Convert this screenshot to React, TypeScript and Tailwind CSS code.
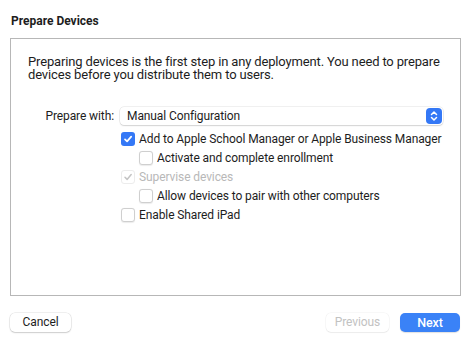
import React from 'react';

function Check({ on, disabled }: { on?: boolean; disabled?: boolean }) {
  if (on) {
    return (
      <span className="flex h-[14px] w-[14px] shrink-0 items-center justify-center rounded-[3px] bg-[#3478f6]">
        <svg width="10" height="10" viewBox="0 0 10 10">
          <path d="M2 5.3 L4.1 7.4 L8.2 2.6" fill="none" stroke="white" strokeWidth="1.7" strokeLinecap="round" strokeLinejoin="round" />
        </svg>
      </span>
    );
  }
  if (disabled) {
    return (
      <span className="flex h-[14px] w-[14px] shrink-0 items-center justify-center rounded-[3px] border border-[#ececec] bg-white">
        <svg width="10" height="10" viewBox="0 0 10 10">
          <path d="M2 5.3 L4.1 7.4 L8.2 2.6" fill="none" stroke="#c4c4c4" strokeWidth="1.5" strokeLinecap="round" strokeLinejoin="round" />
        </svg>
      </span>
    );
  }
  return <span className="h-[14px] w-[14px] shrink-0 rounded-[3px] border border-[#cfcfcf] bg-white shadow-[0_0.5px_1px_rgba(0,0,0,0.08)]" />;
}

function Row({ label, on, disabled, indent }: { label: string; on?: boolean; disabled?: boolean; indent?: boolean }) {
  return (
    <div className={`flex h-[19px] items-center gap-[4px] whitespace-nowrap ${indent ? 'pl-[18px]' : ''}`}>
      <Check on={on} disabled={disabled} />
      <span className={disabled ? 'text-[#b8b8b8]' : 'text-[#1d1d1d]'}>{label}</span>
    </div>
  );
}

export default function App() {
  return (
    <div className="relative h-[348px] w-[474px] bg-white font-['Roboto',sans-serif] text-[12px] tracking-[-0.1px] text-[#1d1d1d]">
      <div className="px-[11px] pt-[13px] text-[12px] font-bold leading-[16px] tracking-normal">Prepare Devices</div>

      <div className="ml-[10px] mt-[9px] h-[258px] w-[451px] border border-[#b7b7b7] bg-white pl-[17px] pr-[8px] pt-[16px]">
        <p className="text-[13px] leading-[13px] tracking-[-0.15px]">
          Preparing devices is the first step in any deployment. You need to prepare devices before you distribute them to users.
        </p>

        <div className="mt-[26px] flex items-center whitespace-nowrap">
          <span className="w-[86px] text-right">Prepare with:</span>
          <div className="ml-[6px] flex h-[18px] w-[323px] items-center justify-between rounded-[4px] bg-white pl-[7px] pr-[1px] shadow-[0_0_0_0.5px_rgba(0,0,0,0.12),0_1px_1.5px_rgba(0,0,0,0.12)]">
            <span>Manual Configuration</span>
            <span className="flex h-[16px] w-[16px] items-center justify-center rounded-[4px] bg-[#3478f6]">
              <svg width="10" height="12" viewBox="0 0 10 12">
                <path d="M2.5 4.5 L5 2 L7.5 4.5 M2.5 7.5 L5 10 L7.5 7.5" fill="none" stroke="white" strokeWidth="1.5" strokeLinecap="round" strokeLinejoin="round" />
              </svg>
            </span>
          </div>
        </div>

        <div className="mt-[4px] flex flex-col pl-[93px]">
          <Row label="Add to Apple School Manager or Apple Business Manager" on />
          <Row label="Activate and complete enrollment" indent />
          <Row label="Supervise devices" disabled />
          <Row label="Allow devices to pair with other computers" indent />
          <Row label="Enable Shared iPad" />
        </div>
      </div>

      <div className="mt-[17px] flex items-center pl-[10px] pr-[14px]">
        <button className="h-[19px] w-[61px] rounded-[5px] bg-white leading-[19px] text-[#1d1d1d] shadow-[0_0_0_0.5px_rgba(0,0,0,0.12),0_1px_1.5px_rgba(0,0,0,0.15)]">
          Cancel
        </button>
        <div className="flex-1" />
        <button className="h-[19px] w-[63px] rounded-[5px] bg-white leading-[19px] text-[#c2c2c2] shadow-[0_0_0_0.5px_rgba(0,0,0,0.06),0_1px_1px_rgba(0,0,0,0.05)]">
          Previous
        </button>
        <button className="ml-[11px] h-[19px] w-[60px] rounded-[5px] bg-[#3a82f7] text-[12.5px] leading-[19px] font-medium text-white shadow-[0_1px_1px_rgba(0,0,0,0.12)]">
          Next
        </button>
      </div>
    </div>
  );
}
